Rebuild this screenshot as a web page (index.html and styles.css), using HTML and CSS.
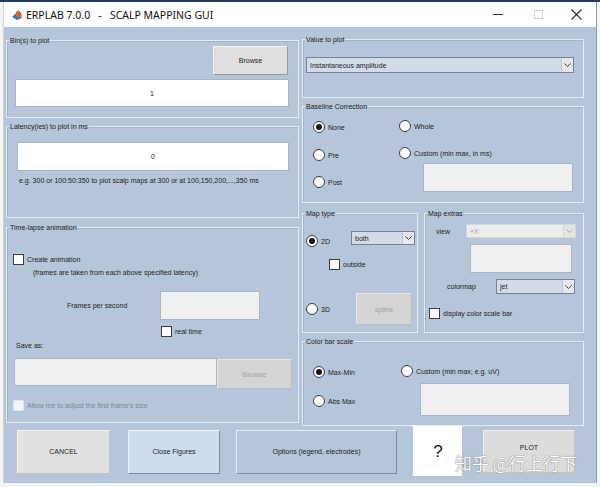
FILE: index.html
```html
<!DOCTYPE html>
<html>
<head>
<meta charset="utf-8">
<title>ERPLAB 7.0.0 - SCALP MAPPING GUI</title>
<link rel="stylesheet" href="styles.css">
</head>
<body>
<div class="desk"></div>
<div class="window">
  <div class="titlebar">
    <svg class="appicon" viewBox="0 0 10 10" width="10" height="10">
      <polygon points="0,7 3,4 5,6 10,8 5,10" fill="#3a6fb0"/>
      <polygon points="3,4 6,0 8,5 10,8 5,6" fill="#e0641c"/>
      <polygon points="6,0 8,5 10,8 9,3" fill="#b83a12"/>
    </svg>
    <span class="title">ERPLAB 7.0.0   -   SCALP MAPPING GUI</span>
    <div class="winctl">
      <span class="wc-min"></span>
      <span class="wc-max"></span>
      <svg class="wc-close" viewBox="0 0 11 11" width="11" height="11"><path d="M0.5 0.5 L10.5 10.5 M10.5 0.5 L0.5 10.5" stroke="#2b2b2b" stroke-width="1.1" fill="none"/></svg>
    </div>
  </div>
  <div class="client">
    <div class="cols">
      <div class="col-left">
        <div class="panel p-bins">
          <div class="legend">Bin(s) to plot</div>
          <div class="btn btn-gray bins-browse">Browse</div>
          <div class="field white bins-field">1</div>
        </div>
        <div class="panel p-lat">
          <div class="legend">Latency(ies) to plot in ms</div>
          <div class="field white lat-field">0</div>
          <div class="hint">e.g. 300 or 100:50:350 to plot scalp maps at 300 or at 100,150,200,...,350 ms</div>
        </div>
        <div class="panel p-anim">
          <div class="legend">Time-lapse animation</div>
          <div class="opt anim-create"><span class="check"></span><span class="lbl">Create animation</span></div>
          <div class="anim-note">(frames are taken from each above specified latency)</div>
          <div class="fps-row">
            <span class="fps-label">Frames per second</span>
            <div class="field fps-field"></div>
          </div>
          <div class="opt realtime"><span class="check"></span><span class="lbl">real time</span></div>
          <div class="save-label">Save as:</div>
          <div class="save-row">
            <div class="field save-field"></div>
            <div class="btn btn-disabled save-browse">Browse</div>
          </div>
          <div class="opt allow"><span class="check check-dis"></span><span class="lbl">Allow me to adjust the first frame's size</span></div>
        </div>
      </div>
      <div class="col-right">
        <div class="panel p-value">
          <div class="legend">Value to plot</div>
          <div class="dd value-dd"><span class="dd-txt">Instantaneous amplitude</span><span class="dd-arrow"><svg viewBox="0 0 7 4" width="7" height="4"><path d="M0.5 0.5 L3.5 3.5 L6.5 0.5" stroke="#444" fill="none"/></svg></span></div>
        </div>
        <div class="panel p-base">
          <div class="legend">Baseline Correction</div>
          <div class="two-col">
            <div class="bl-left">
              <div class="opt"><span class="radio on"></span><span class="lbl">None</span></div>
              <div class="opt bl-pre"><span class="radio"></span><span class="lbl">Pre</span></div>
              <div class="opt bl-post"><span class="radio"></span><span class="lbl">Post</span></div>
            </div>
            <div class="bl-right">
              <div class="opt"><span class="radio"></span><span class="lbl">Whole</span></div>
              <div class="opt bl-custom"><span class="radio"></span><span class="lbl">Custom (min max, in ms)</span></div>
              <div class="field bl-field"></div>
            </div>
          </div>
        </div>
        <div class="map-row">
          <div class="panel p-maptype">
            <div class="legend">Map type</div>
            <div class="mt-2d">
              <div class="opt mt-grp2d"><span class="radio on"></span><span class="lbl">2D</span></div>
              <div class="dd both-dd"><span class="dd-txt">both</span><span class="dd-arrow"><svg viewBox="0 0 7 4" width="7" height="4"><path d="M0.5 0.5 L3.5 3.5 L6.5 0.5" stroke="#444" fill="none"/></svg></span></div>
            </div>
            <div class="opt outside"><span class="check"></span><span class="lbl">outside</span></div>
            <div class="mt-3d">
              <div class="opt mt-grp3d"><span class="radio"></span><span class="lbl">3D</span></div>
              <div class="btn btn-disabled spline">spline</div>
            </div>
          </div>
          <div class="panel p-extras">
            <div class="legend">Map extras</div>
            <div class="ex-view">
              <span class="ex-viewlbl">view</span>
              <div class="dd dd-dis view-dd"><span class="dd-txt">+X</span><span class="dd-arrow"><svg viewBox="0 0 7 4" width="7" height="4"><path d="M0.5 0.5 L3.5 3.5 L6.5 0.5" stroke="#aaa" fill="none"/></svg></span></div>
            </div>
            <div class="field ex-field"></div>
            <div class="ex-cmap">
              <span class="ex-cmaplbl">colormap</span>
              <div class="dd cmap-dd"><span class="dd-txt">jet</span><span class="dd-arrow"><svg viewBox="0 0 7 4" width="7" height="4"><path d="M0.5 0.5 L3.5 3.5 L6.5 0.5" stroke="#444" fill="none"/></svg></span></div>
            </div>
            <div class="opt ex-bar"><span class="check"></span><span class="lbl">display color scale bar</span></div>
          </div>
        </div>
        <div class="panel p-cbar">
          <div class="legend">Color bar scale</div>
          <div class="two-col">
            <div class="cb-left">
              <div class="opt"><span class="radio on"></span><span class="lbl">Max-Min</span></div>
              <div class="opt cb-abs"><span class="radio"></span><span class="lbl">Abs Max</span></div>
            </div>
            <div class="cb-right">
              <div class="opt"><span class="radio"></span><span class="lbl">Custom (min max; e.g. uV)</span></div>
              <div class="field cb-field"></div>
            </div>
          </div>
        </div>
      </div>
    </div>
    <div class="actions">
      <div class="btn act act-cancel">CANCEL</div>
      <div class="btn act act-close">Close Figures</div>
      <div class="btn act act-options">Options (legend, electrodes)</div>
      <div class="btn act act-help">?</div>
      <div class="btn act act-plot">PLOT</div>
    </div>
  </div>
</div>
<div class="watermark">知乎 @行上行下</div>
</body>
</html>
```
FILE: styles.css
```css
* { box-sizing: border-box; }
html, body { margin: 0; padding: 0; }
body {
  width: 600px;
  height: 487px;
  overflow: hidden;
  position: relative;
  background: #f4f4f4;
  font-family: "Liberation Sans", Arial, sans-serif;
  font-size: 7px;
  color: #1c1c1c;
}
.desk { height: 2px; background: #1f3c62; }
.window {
  margin-left: 3px;
  width: 594px;
  height: 481px;
  background: #b6c6da;
  border-right: 1px solid #8c98a8;
  border-left: 1px solid #c9d2dc;
}

/* title bar */
.titlebar {
  height: 25px;
  background: #ffffff;
  display: flex;
  align-items: center;
}
.appicon { margin-left: 8px; flex: none; }
.title {
  margin-left: 4px;
  white-space: pre;
  font-family: "Noto Sans", "Open Sans", sans-serif;
  font-size: 10.5px;
  color: #111;
}
.winctl { margin-left: auto; display: flex; align-items: center; }
.wc-min { width: 10px; height: 1px; background: #333; }
.wc-max { width: 9px; height: 9px; border: 1px solid #cfcfcf; margin-left: 31px; }
.wc-close { margin-left: 28px; margin-right: 14px; }

/* client */
.client { height: 456px; padding: 12px 0 0 2px; }
.cols { display: flex; align-items: flex-start; }
.col-left { width: 293px; margin-top: 1px; display: flex; flex-direction: column; }
.col-right { width: 282px; margin-left: 3px; display: flex; flex-direction: column; }

.panel {
  border: 1px solid #e4ebf4;
  box-shadow: inset 1px 1px 0 rgba(125, 145, 170, 0.35);
  display: flex;
  flex-direction: column;
  align-items: flex-start;
}
.legend {
  height: 9px;
  line-height: 9px;
  margin: -5px 0 -4px 2px;
  padding: 0 1px;
  background: #b6c6da;
  white-space: nowrap;
}

.field { border: 1px solid #a9b5c4; background: #f0f0f0; flex: none; }
.field.white {
  background: #ffffff;
  display: flex;
  align-items: center;
  justify-content: center;
}
.btn {
  display: flex;
  align-items: center;
  justify-content: center;
  border: 1px solid;
  border-color: #f4f4f4 #9a9a9a #9a9a9a #f4f4f4;
  flex: none;
}
.btn-gray { background: #dfdfdf; }
.btn-disabled { background: #d4d4d4; color: #a3a3a3; border-color: #e6e6e6 #bdbdbd #bdbdbd #e6e6e6; }

.opt { display: flex; align-items: center; white-space: nowrap; }
.opt .lbl { margin-left: 3px; }
.radio {
  width: 12px; height: 12px;
  border-radius: 50%;
  border: 1px solid #3d3d3d;
  background: #ffffff;
  display: flex; align-items: center; justify-content: center;
  flex: none;
}
.radio.on::after {
  content: "";
  width: 6px; height: 6px;
  border-radius: 50%;
  background: #1a1a1a;
}
.check {
  width: 11px; height: 11px;
  border: 1px solid #3d3d3d;
  background: #ffffff;
  flex: none;
}
.check-dis { border-color: #dde2e8; background: #f3f4f6; }

.dd {
  display: flex;
  align-items: stretch;
  border: 1px solid #76828f;
  background: #d3dbe6;
  flex: none;
}
.dd-txt { flex: 1; display: flex; align-items: center; padding-left: 3px; }
.dd-arrow {
  width: 12px;
  background: #e6e8eb;
  border-left: 1px solid #c3c9d1;
  display: flex; align-items: center; justify-content: center;
}
.dd-dis { border-color: #d6d6d6; background: #ececec; color: #a3a3a3; }
.dd-dis .dd-arrow { background: #e4e4e4; border-left-color: #d6d6d6; }

/* left: bins */
.p-bins { height: 78px; }
.bins-browse { margin: 5px 0 0 206px; width: 75px; height: 29px; }
.bins-field { margin: 4px 0 0 8px; width: 274px; height: 28px; }

/* left: latency */
.p-lat { height: 92px; margin-top: 8px; }
.lat-field { margin: 15px 0 0 10px; width: 272px; height: 29px; }
.hint { margin: 5px 0 0 12px; line-height: 9px; white-space: nowrap; }

/* left: animation */
.p-anim { height: 196px; margin-top: 9px; }
.anim-create { margin: 26px 0 0 6px; }
.anim-note { margin: 3px 0 0 26px; line-height: 9px; white-space: nowrap; }
.fps-row { margin-top: 14px; display: grid; grid-template-columns: 153px 100px; align-items: center; }
.fps-label { padding-left: 60px; }
.fps-field { height: 29px; }
.realtime { margin: 6px 0 0 154px; }
.save-label { margin: 4px 0 0 9px; line-height: 9px; }
.save-row { margin: 8px 0 0 7px; display: flex; align-items: flex-start; }
.save-field { width: 203px; height: 28px; }
.save-browse { width: 75px; height: 30px; margin-top: 1px; }
.allow { margin: 11px 0 0 6px; color: #7b8697; }

/* right: value */
.p-value { height: 59px; }
.value-dd { margin: 17px 0 0 3px; width: 268px; height: 16px; }

/* right: baseline */
.p-base { height: 97px; margin-top: 8px; }
.two-col { display: flex; align-items: flex-start; }
.bl-left { margin-left: 10px; padding-top: 14px; width: 86px; display: flex; flex-direction: column; }
.bl-pre { margin-top: 16px; }
.bl-post { margin-top: 15px; }
.bl-right { padding-top: 13px; display: flex; flex-direction: column; align-items: flex-start; }
.bl-custom { margin-top: 15px; }
.bl-field { margin: 4px 0 0 24px; width: 150px; height: 29px; }

/* right: map row */
.map-row { margin-top: 10px; display: flex; height: 120px; }
.p-maptype { width: 116px; height: 120px; }
.p-extras { width: 160px; height: 120px; margin-left: 6px; }

.mt-2d { margin-top: 17px; display: flex; align-items: flex-start; }
.mt-grp2d { margin: 4px 0 0 3px; width: 45px; }
.both-dd { width: 64px; height: 14px; }
.outside { margin: 12px 0 0 26px; }
.mt-3d { margin-top: 23px; display: flex; align-items: center; }
.mt-grp3d { margin-left: 3px; width: 50px; }
.spline { width: 56px; height: 32px; }

.ex-view { margin-top: 10px; display: flex; align-items: center; }
.ex-viewlbl { margin-left: 11px; width: 30px; }
.view-dd { width: 110px; height: 14px; }
.ex-field { margin: 6px 0 0 45px; width: 102px; height: 29px; }
.ex-cmap { margin-top: 6px; display: flex; align-items: center; }
.ex-cmaplbl { margin-left: 22px; width: 49px; }
.cmap-dd { width: 79px; height: 15px; }
.ex-bar { margin: 14px 0 0 4px; }

/* right: colorbar */
.p-cbar { height: 85px; margin-top: 8px; }
.cb-left { margin-left: 10px; padding-top: 24px; width: 88px; display: flex; flex-direction: column; }
.cb-abs { margin-top: 17px; }
.cb-right { padding-top: 23px; display: flex; flex-direction: column; align-items: flex-start; }
.cb-field { margin: 6px 0 0 19px; width: 150px; height: 33px; }

/* action buttons */
.actions { display: flex; align-items: center; height: 51px; }
.act { height: 44px; }
.act-cancel { margin-left: 11px; width: 93px; background: #e0e0e0; border-color: #f2f2f2 #c4c4c4 #c4c4c4 #f2f2f2; }
.act-close { margin-left: 18px; width: 92px; background: #cedcf0; border-color: #eef3fa #7f8c9d #7f8c9d #eef3fa; }
.act-options { margin-left: 16px; width: 161px; background: #b6c6da; border-color: #e6edf5 #7f8c9d #7f8c9d #e6edf5; }
.act-help { margin-left: 16px; width: 50px; height: 51px; background: #ffffff; border-color: #ffffff #b7c0cc #b7c0cc #ffffff; font-size: 17px; color: #111; }
.act-plot { margin-left: 20px; width: 92px; height: 43px; padding-bottom: 9px; background: #dcdcdc; border-color: #ededed #c4c4c4 #c4c4c4 #ededed; }

.watermark {
  position: absolute;
  left: 455px;
  top: 454px;
  font-family: "Noto Sans CJK SC", "Noto Sans", sans-serif;
  font-size: 17px;
  line-height: 17px;
  color: #ffffff;
  white-space: nowrap;
  text-shadow: 0 0 1px #7d7d7d, 0 0 1px #7d7d7d;
}
```
